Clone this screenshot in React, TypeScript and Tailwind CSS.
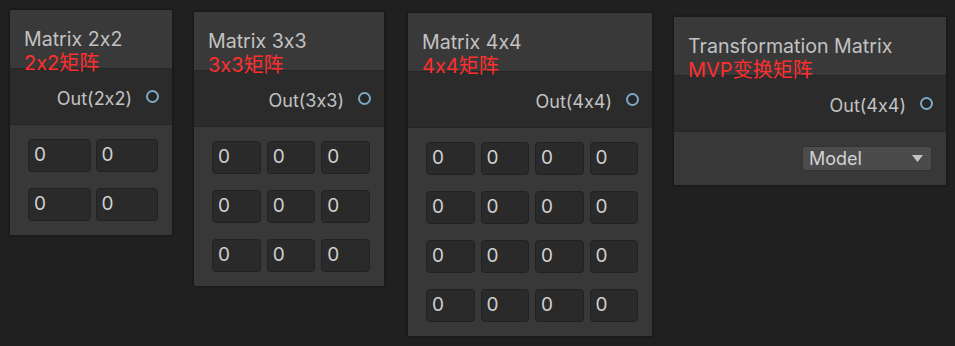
import React from "react";

const FONT = { fontFamily: 'Inter, "Noto Sans", sans-serif' };
const SUB = { fontFamily: 'Inter, "Noto Sans CJK SC", sans-serif' };

function Cell() {
  return (
    <div className="h-[33px] rounded-[4px] bg-[#2a2a2a] border border-[#212121] flex items-center pl-[5px] text-[19px] text-[#d0d0d0]">
      0
    </div>
  );
}

function Grid({ n }: { n: number }) {
  const cols = n === 2 ? "grid-cols-2 gap-x-[5px]" : n === 3 ? "grid-cols-3 gap-x-[6px]" : "grid-cols-4 gap-x-[6px]";
  return (
    <div className={`grid ${cols} gap-y-[16px] pt-[14px] pb-[14px] pl-[18px] pr-[14px]`}>
      {Array.from({ length: n * n }).map((_, i) => (
        <Cell key={i} />
      ))}
    </div>
  );
}

function Node({
  left,
  top,
  width,
  title,
  sub,
  out,
  children,
}: {
  left: number;
  top: number;
  width: number;
  title: string;
  sub: string;
  out: string;
  children: React.ReactNode;
}) {
  return (
    <div
      className="absolute bg-[#383838] border border-[#1a1a1a] rounded-[2px] shadow-[0_0_2px_rgba(0,0,0,0.4)]"
      style={{ left, top, width }}
    >
      <div className="h-[59px] bg-[#393939] border-b border-[#262626] pl-[14px] pt-[18px] relative z-10">
        <div className="text-[19.6px] leading-[23px] text-[#c2c2c2] whitespace-nowrap">{title}</div>
        <div className="text-[20px] leading-[24px] text-[#ff2e2e] whitespace-nowrap" style={SUB}>
          {sub}
        </div>
      </div>
      <div className="h-[56px] bg-[#2b2b2b] border-b border-[#262626] flex items-center justify-end pr-[13px] gap-[14px]">
        <span className="text-[18px] text-[#c2c2c2] mt-[4px]">{out}</span>
        <span className="w-[13px] h-[13px] rounded-full border-2 border-[#7ea9c7] bg-[#262626]" />
      </div>
      {children}
    </div>
  );
}

export default function App() {
  return (
    <div
      className="relative w-[955px] h-[346px] bg-[#202020] overflow-hidden [font-feature-settings:'calt'_0]"
      style={FONT}
    >
      <Node left={9} top={9} width={164} title="Matrix 2x2" sub="2x2矩阵" out="Out(2x2)">
        <Grid n={2} />
      </Node>
      <Node left={193} top={11} width={192} title="Matrix 3x3" sub="3x3矩阵" out="Out(3x3)">
        <Grid n={3} />
      </Node>
      <Node left={407} top={12} width={246} title="Matrix 4x4" sub="4x4矩阵" out="Out(4x4)">
        <Grid n={4} />
      </Node>
      <Node left={673} top={16} width={274} title="Transformation Matrix" sub="MVP变换矩阵" out="Out(4x4)">
        <div className="flex justify-end pt-[14px] pb-[14px] pr-[14px]">
          <div className="w-[130px] h-[25px] rounded-[3px] bg-[#4b4b4b] border border-[#333333] flex items-center justify-between pl-[6px] pr-[8px]">
            <span className="text-[18px] text-[#d2d2d2]">Model</span>
            <svg width="11" height="7" viewBox="0 0 11 7">
              <path d="M0 0 H11 L5.5 7 Z" fill="#c4c4c4" />
            </svg>
          </div>
        </div>
      </Node>
    </div>
  );
}
